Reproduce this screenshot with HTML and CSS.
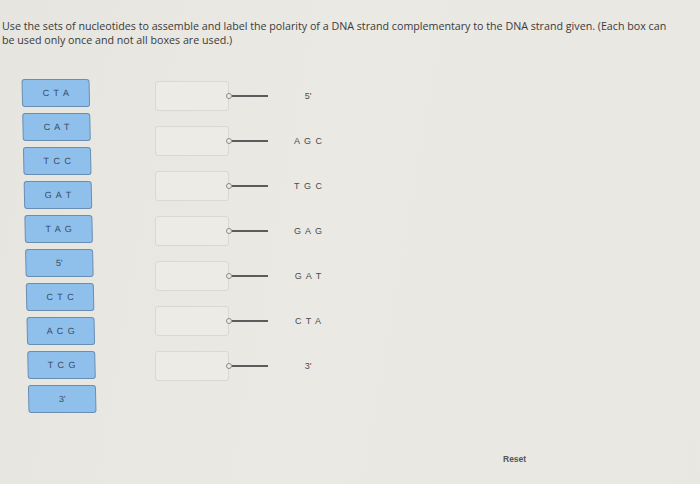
FILE: index.html
```html
<!DOCTYPE html>
<html>
<head>
    <meta charset="UTF-8">
    <title>DNA Strand</title>
    <link rel="stylesheet" href="styles.css">
</head>
<body>
    <p class="prompt">Use the sets of nucleotides to assemble and label the polarity of a DNA strand complementary to the DNA strand given. (Each box can be used only once and not all boxes are used.)</p>
    <div class="workspace">
        <div class="tiles">
            <div class="tile">C T A</div>
            <div class="tile">C A T</div>
            <div class="tile">T C C</div>
            <div class="tile">G A T</div>
            <div class="tile">T A G</div>
            <div class="tile">5'</div>
            <div class="tile">C T C</div>
            <div class="tile">A C G</div>
            <div class="tile">T C G</div>
            <div class="tile">3'</div>
        </div>
        <div class="targets">
            <div class="target-row">
                <div class="drop-box"></div>
                <div class="connector"><span class="knob"></span><span class="wire"></span></div>
                <div class="strand-label">5'</div>
            </div>
            <div class="target-row">
                <div class="drop-box"></div>
                <div class="connector"><span class="knob"></span><span class="wire"></span></div>
                <div class="strand-label">A G C</div>
            </div>
            <div class="target-row">
                <div class="drop-box"></div>
                <div class="connector"><span class="knob"></span><span class="wire"></span></div>
                <div class="strand-label">T G C</div>
            </div>
            <div class="target-row">
                <div class="drop-box"></div>
                <div class="connector"><span class="knob"></span><span class="wire"></span></div>
                <div class="strand-label">G A G</div>
            </div>
            <div class="target-row">
                <div class="drop-box"></div>
                <div class="connector"><span class="knob"></span><span class="wire"></span></div>
                <div class="strand-label">G A T</div>
            </div>
            <div class="target-row">
                <div class="drop-box"></div>
                <div class="connector"><span class="knob"></span><span class="wire"></span></div>
                <div class="strand-label">C T A</div>
            </div>
            <div class="target-row">
                <div class="drop-box"></div>
                <div class="connector"><span class="knob"></span><span class="wire"></span></div>
                <div class="strand-label">3'</div>
            </div>
        </div>
    </div>
    <div class="footer">
        <button class="reset-btn">Reset</button>
    </div>
</body>
</html>
```

FILE: styles.css
```css
/* Base styles */
body {
    margin: 0;
    height: 484px;
    overflow: hidden;
    font-family: "Open Sans", "Liberation Sans", sans-serif;
    color: #3b3b3b;
    background: linear-gradient(100deg, #e6e5e0 0%, #eae9e4 45%, #e8e7e2 100%);
}

.prompt {
    margin: 0;
    padding: 19px 30px 0 2px;
    font-size: 10.7px;
    line-height: 14px;
    letter-spacing: 0;
    color: #3a3a3a;
}

/* Work area */
.workspace {
    display: flex;
    align-items: flex-start;
    padding-top: 32px;
}

.tiles {
    display: flex;
    flex-direction: column;
    gap: 6px;
    margin-left: 25px;
    transform: skewX(1.2deg);
}

.tile {
    width: 66px;
    height: 26px;
    border: 1.5px solid #6a8db3;
    border-radius: 3px;
    background: #8fc0ec;
    color: #3a4c63;
    font-family: "Liberation Sans", Arial, sans-serif;
    font-size: 9px;
    display: flex;
    align-items: center;
    justify-content: center;
    word-spacing: 2px;
}

/* Drop targets */
.targets {
    display: flex;
    flex-direction: column;
    gap: 15px;
    margin-left: 62px;
    padding-top: 2px;
}

.target-row {
    display: flex;
    align-items: center;
    height: 30px;
}

.drop-box {
    width: 72px;
    height: 28px;
    border: 1px solid #d9d8d3;
    border-radius: 3px;
    background: #ecebe6;
}

.connector {
    display: flex;
    align-items: center;
    margin-left: -3px;
}

.knob {
    width: 4px;
    height: 4px;
    border: 1px solid #8a8a88;
    border-radius: 50%;
    background: #eeede9;
}

.wire {
    width: 36px;
    height: 1.5px;
    background: #5c5c5c;
}

.strand-label {
    width: 40px;
    margin-left: 20px;
    text-align: center;
    font-family: "Liberation Sans", Arial, sans-serif;
    font-size: 9px;
    color: #4a4a4a;
    word-spacing: 2px;
}

/* Footer */
.footer {
    padding: 32px 0 0 503px;
}

.reset-btn {
    padding: 0;
    border: none;
    background: none;
    font-family: "Liberation Sans", Arial, sans-serif;
    font-size: 8.5px;
    font-weight: bold;
    color: #555;
    cursor: pointer;
}
```
